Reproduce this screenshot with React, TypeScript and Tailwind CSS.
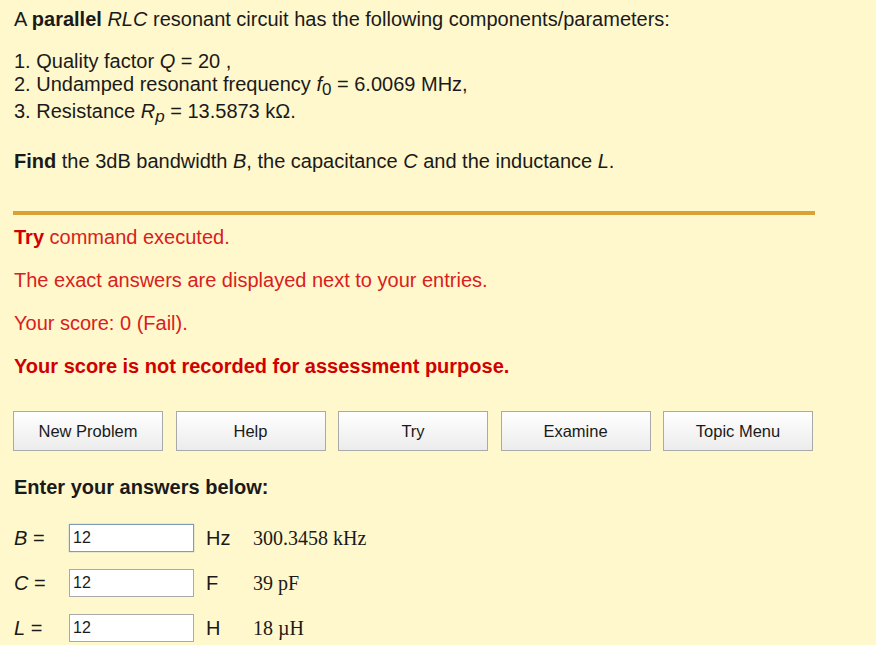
import React from 'react';

const buttons = ['New Problem', 'Help', 'Try', 'Examine', 'Topic Menu'];

const answers = [
  { sym: 'B', unit: 'Hz', exact: '300.3458 kHz', focused: true },
  { sym: 'C', unit: 'F', exact: '39 pF', focused: false },
  { sym: 'L', unit: 'H', exact: '18 \u00b5H', focused: false },
];

export default function App() {
  return (
    <div className="min-h-[645px] w-full bg-[#fff8cc] text-[#1a1a1a] text-[20px] font-['Liberation_Sans',Arial,sans-serif]">
      <div className="px-[14px] pt-[8px]">
        <p className="leading-[22px]">
          A <b>parallel</b> <i>RLC</i> resonant circuit has the following components/parameters:
        </p>

        <div className="mt-[20px]">
          <div className="h-[23px] leading-[22px]">1. Quality factor <i>Q</i> = 20 ,</div>
          <div className="h-[27px] leading-[22px]">
            2. Undamped resonant frequency <i>f</i><sub className="text-[17px]">0</sub> = 6.0069 MHz,
          </div>
          <div className="h-[22px] leading-[22px]">
            3. Resistance <i>R</i><sub className="text-[17px] italic">p</sub> = 13.5873 k&Omega;.
          </div>
        </div>

        <p className="mt-[28px] leading-[22px]">
          <b>Find</b> the 3dB bandwidth <i>B</i>, the capacitance <i>C</i> and the inductance <i>L</i>.
        </p>

        <div className="mt-[39px] ml-[-1px] h-[4px] w-[802px] bg-[#d9a236]" />

        <div className="text-[#d92020]">
          <p className="mt-[11px] leading-[22px]"><b className="text-[#d10000]">Try</b> command executed.</p>
          <p className="mt-[21px] leading-[22px]">The exact answers are displayed next to your entries.</p>
          <p className="mt-[21px] leading-[22px]">Your score: 0 (Fail).</p>
          <p className="mt-[21px] leading-[22px] font-bold text-[#d10000]">Your score is not recorded for assessment purpose.</p>
        </div>

        <div className="mt-[34px] ml-[-1px] flex gap-[12.5px]">
          {buttons.map((b) => (
            <button
              key={b}
              className="h-[40px] w-[150px] border border-[#a9a9a9] bg-gradient-to-b from-white to-[#ececec] text-[16.5px] text-[#1a1a1a]"
            >
              {b}
            </button>
          ))}
        </div>

        <p className="mt-[25px] leading-[22px] font-bold">Enter your answers below:</p>

        <div className="mt-[26px] flex flex-col gap-[17px]">
          {answers.map((a) => (
            <div key={a.sym} className="flex h-[28px] items-center">
              <span className="w-[55px]">
                <i>{a.sym}</i> =
              </span>
              <input
                defaultValue="12"
                className={
                  'h-[28px] w-[125px] bg-white px-[3px] text-[16px] text-[#1a1a1a] outline-none border ' +
                  (a.focused ? 'border-[#7f9db9] shadow-[0_0_1px_#7f9db9]' : 'border-[#a9a9a9]')
                }
              />
              <span className="ml-[12px] w-[47px]">{a.unit}</span>
              <span className="font-['Liberation_Serif','Times_New_Roman',serif] text-[20px]">{a.exact}</span>
            </div>
          ))}
        </div>
      </div>
    </div>
  );
}
